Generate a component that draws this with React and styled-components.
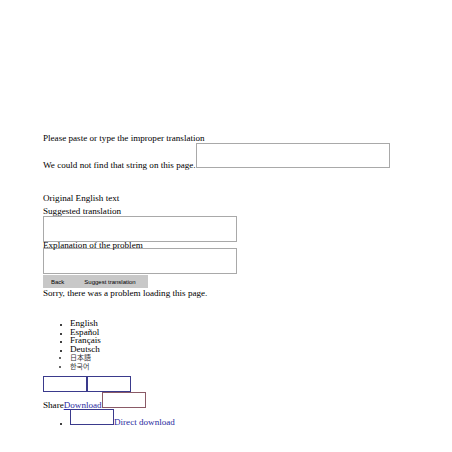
import React from "react";
import styled, { createGlobalStyle } from "styled-components";

const Global = createGlobalStyle`
  html, body { margin: 0; padding: 0; background: #fff; }
  body { font-family: "Liberation Serif", "Times New Roman", serif; color: #000; }
`;

const Page = styled.div`
  padding: 133px 0 0 43px;
  font-size: 9.1px;
  line-height: 10px;
`;

const Line = styled.div`
  margin-top: ${(p) => p.$mt || 0}px;
  line-height: ${(p) => p.$lh || 10}px;
`;

const Box = styled.textarea`
  display: ${(p) => (p.$block ? "block" : "inline-block")};
  width: ${(p) => p.$w}px;
  height: ${(p) => p.$h}px;
  box-sizing: border-box;
  border: 1px solid #a9a9a9;
  margin: 0;
  padding: 0;
  resize: none;
  vertical-align: baseline;
  background: #fff;
`;

const Buttons = styled.div`
  display: flex;
  width: 105px;
  height: 13px;
  margin-top: 1px;
  background: #c8c8c8;
  font-family: "Liberation Sans", Arial, sans-serif;
  font-size: 6px;
  align-items: center;
`;

const Btn = styled.span`
  padding-left: ${(p) => p.$pl}px;
`;

const LangList = styled.ul`
  margin: 21px 0 0;
  padding-left: 27px;
  list-style: disc;
  li::marker { font-size: 6px; }
`;

const Lang = styled.li`
  height: 8.6px;
  line-height: 8.6px;
  font-family: ${(p) =>
    p.$cjk
      ? `"Noto Sans CJK JP", "Noto Sans CJK KR", sans-serif`
      : `"Liberation Serif", serif`};
  font-size: ${(p) => (p.$cjk ? 7 : 9.1)}px;
  color: ${(p) => (p.$cjk ? "#333" : "#000")};
`;

const TabRow = styled.div`
  display: flex;
  margin-top: 5px;
`;

const Tab = styled.span`
  display: inline-block;
  vertical-align: baseline;
  width: 44px;
  height: 16px;
  box-sizing: border-box;
  border: 1px solid ${(p) => p.$c || "#3a3a8c"};
`;

const ShareLine = styled.div`
  line-height: 6px;
`;

const Link = styled.a`
  color: #2a2aa0;
  text-decoration: underline;
`;

const DlList = styled.ul`
  margin: 1px 0 0;
  padding-left: 27px;
  line-height: 6px;
  li::marker { font-size: 6px; }
`;

export default function App() {
  return (
    <>
      <Global />
      <Page>
        <Line>Please paste or type the improper translation</Line>
        <Line>
          We could not find that string on this page.
          <Box $w={194} $h={25} />
        </Line>
        <Line $mt={23}>Original English text</Line>
        <Line $mt={3}>Suggested translation</Line>
        <Box $block $w={194} $h={26} />
        <Line $lh={6}>Explanation of the problem</Line>
        <Box $block $w={194} $h={26} />
        <Buttons>
          <Btn $pl={8}>Back</Btn>
          <Btn $pl={20}>Suggest translation</Btn>
        </Buttons>
        <Line>Sorry, there was a problem loading this page.</Line>
        <LangList>
          <Lang>English</Lang>
          <Lang>Español</Lang>
          <Lang>Français</Lang>
          <Lang>Deutsch</Lang>
          <Lang $cjk>日本語</Lang>
          <Lang $cjk>한국어</Lang>
        </LangList>
        <TabRow>
          <Tab />
          <Tab />
        </TabRow>
        <ShareLine>
          Share<Link href="#">Download</Link>
          <Tab $c="#8a5a66" />
        </ShareLine>
        <DlList>
          <li>
            <Tab />
            <Link href="#">Direct download</Link>
          </li>
        </DlList>
      </Page>
    </>
  );
}
